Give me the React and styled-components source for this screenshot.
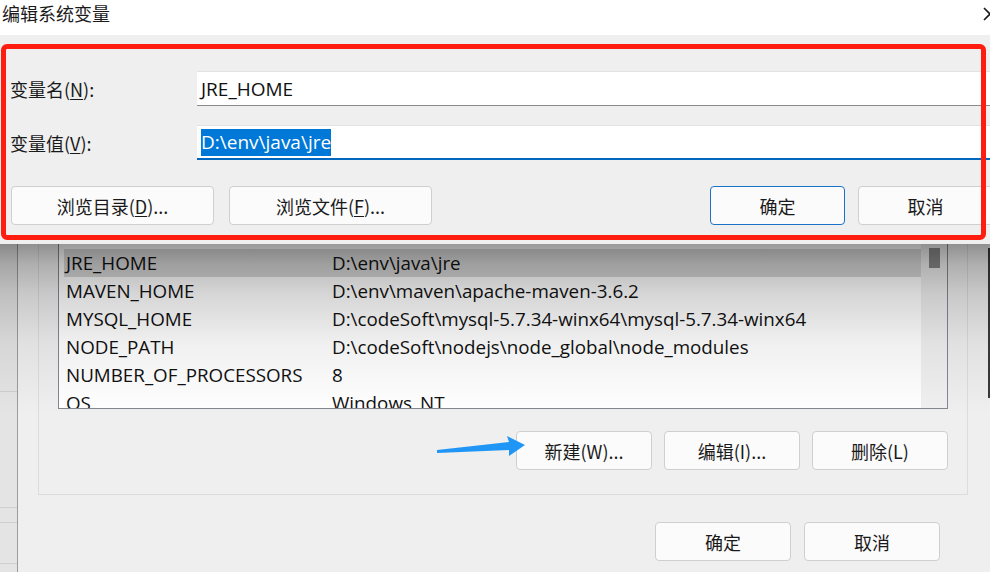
import styled, { createGlobalStyle } from "styled-components";

const GlobalStyle = createGlobalStyle`
    html, body {
        margin: 0;
        padding: 0;
        background: #efefef;
    }
    body {
        font-family: "Open Sans", "Noto Sans CJK SC", sans-serif;
        color: #1a1a1a;
    }
`;

const variaveis = [
    { nome: 'JRE_HOME', valor: 'D:\\env\\java\\jre', selecionada: true },
    { nome: 'MAVEN_HOME', valor: 'D:\\env\\maven\\apache-maven-3.6.2' },
    { nome: 'MYSQL_HOME', valor: 'D:\\codeSoft\\mysql-5.7.34-winx64\\mysql-5.7.34-winx64' },
    { nome: 'NODE_PATH', valor: 'D:\\codeSoft\\nodejs\\node_global\\node_modules' },
    { nome: 'NUMBER_OF_PROCESSORS', valor: '8' },
    { nome: 'OS', valor: 'Windows_NT' },
];

export default function App() {
    return (
        <Pagina>
            <GlobalStyle />
            <DialogoFrente>
                <BarraTitulo>
                    <Titulo>编辑系统变量</Titulo>
                    <Fechar viewBox="0 0 24 24">
                        <path d="M6 6 L18 18 M18 6 L6 18" stroke="#1a1a1a" strokeWidth="1.6" fill="none" />
                    </Fechar>
                </BarraTitulo>
                <CorpoFrente>
                    <Formulario>
                        <Rotulo>变量名(<u>N</u>):</Rotulo>
                        <Campo>JRE_HOME</Campo>
                        <Rotulo>变量值(<u>V</u>):</Rotulo>
                        <Campo focado>
                            <Selecao>D:\env\java\jre</Selecao>
                        </Campo>
                    </Formulario>
                    <LinhaBotoesFrente>
                        <GrupoBotoes gap={15}>
                            <Botao largura={203}>浏览目录(<u>D</u>)...</Botao>
                            <Botao largura={203}>浏览文件(<u>F</u>)...</Botao>
                        </GrupoBotoes>
                        <GrupoBotoes>
                            <Botao largura={135} padrao>确定</Botao>
                            <Botao largura={135}>取消</Botao>
                        </GrupoBotoes>
                    </LinhaBotoesFrente>
                </CorpoFrente>
                <MolduraVermelha />
            </DialogoFrente>

            <DialogoFundo>
                <FaixaEsquerda>
                    <CelulaFaixa altura={147} />
                    <CelulaFaixa altura={115} />
                    <CelulaFaixa altura={14} />
                    <CelulaFaixa altura={40} />
                </FaixaEsquerda>
                <ConteudoFundo>
                    <Grupo>
                        <Lista>
                            <Linhas>
                                {variaveis.map(v => (
                                    <Linha key={v.nome} selecionada={v.selecionada}>
                                        <Nome>{v.nome}</Nome>
                                        <span>{v.valor}</span>
                                    </Linha>
                                ))}
                            </Linhas>
                            <BarraRolagem>
                                <Polegar />
                            </BarraRolagem>
                        </Lista>
                        <LinhaBotoesLista>
                            <Botao largura={136}>新建(W)...</Botao>
                            <Botao largura={136}>编辑(I)...</Botao>
                            <Botao largura={136}>删除(L)</Botao>
                        </LinhaBotoesLista>
                    </Grupo>
                    <LinhaBotoesFinal>
                        <Botao largura={136}>确定</Botao>
                        <Botao largura={136}>取消</Botao>
                    </LinhaBotoesFinal>
                </ConteudoFundo>
                <BordaDireita />
                <Sombra />
            </DialogoFundo>

            <Seta viewBox="0 0 990 572">
                <polygon points="437,450 509,442 507,436 525,445 509,456 509,450 437,453" fill="#1f96f5" />
            </Seta>
        </Pagina>
    )
}

const Pagina = styled.div`
    position: relative;
    width: 990px;
    height: 572px;
    overflow: hidden;
    background: #efefef;
    display: flex;
    flex-direction: column;
`;

const DialogoFrente = styled.div`
    position: relative;
    z-index: 2;
    height: 244px;
    flex-shrink: 0;
    display: flex;
    flex-direction: column;
    background: #efefef;
`;

const BarraTitulo = styled.div`
    height: 35px;
    background: #ffffff;
    display: flex;
    justify-content: space-between;
    align-items: flex-start;
`;

const Titulo = styled.span`
    font-family: "Noto Sans CJK SC", sans-serif;
    font-size: 18px;
    line-height: 24px;
    padding: 1px 0 0 2px;
    color: #1a1a1a;
`;

const Fechar = styled.svg`
    width: 24px;
    height: 24px;
    margin: 2px -12px 0 0;
`;

const CorpoFrente = styled.div`
    flex: 1;
    padding: 36px 0 0 10px;
    display: flex;
    flex-direction: column;
`;

const Formulario = styled.div`
    display: grid;
    grid-template-columns: 187px 1fr;
    row-gap: 19px;
    align-items: center;
`;

const Rotulo = styled.span`
    font-family: "Noto Sans CJK SC", sans-serif;
    font-size: 18px;
    color: #1a1a1a;

    u {
        text-underline-offset: 2px;
    }
`;

const Campo = styled.div`
    height: 35px;
    box-sizing: border-box;
    background: #ffffff;
    border-top: 1px solid #e2e2e2;
    border-bottom: ${props => props.focado ? '2px solid #0067c0' : '1px solid #8a8a8a'};
    display: flex;
    align-items: center;
    padding-left: 4px;
    font-size: 19px;
    color: #111111;
`;

const Selecao = styled.span`
    background: #0078d7;
    color: #ffffff;
    line-height: 27px;
`;

const LinhaBotoesFrente = styled.div`
    margin-top: 26px;
    padding-left: 1px;
    margin-right: -3px;
    display: flex;
    justify-content: space-between;
`;

const GrupoBotoes = styled.div`
    display: flex;
    gap: ${props => props.gap || 13}px;
`;

const Botao = styled.button`
    width: ${props => props.largura}px;
    height: 39px;
    box-sizing: border-box;
    background: #fbfbfb;
    border: 1px solid ${props => props.padrao ? '#1a73c9' : '#cfcfcf'};
    border-radius: 4px;
    font-family: "Noto Sans CJK SC", sans-serif;
    font-size: 18px;
    color: #1a1a1a;
    padding: 0;

    u {
        text-underline-offset: 2px;
    }
`;

const MolduraVermelha = styled.div`
    position: absolute;
    left: 1px;
    top: 44px;
    width: 985px;
    height: 196px;
    box-sizing: border-box;
    border: 5px solid #ff1d10;
    border-radius: 6px;
    pointer-events: none;
`;

const DialogoFundo = styled.div`
    position: relative;
    flex: 1;
    display: flex;
    background: #efefef;
`;

/* sombra que o dialogo da frente projeta sobre o de tras */
const Sombra = styled.div`
    position: absolute;
    z-index: 1;
    left: 0;
    width: 990px;
    top: 0;
    height: 170px;
    pointer-events: none;
    background-image: linear-gradient(
        to bottom,
        rgba(0, 0, 0, 0.4) 0px,
        rgba(0, 0, 0, 0.27) 20px,
        rgba(0, 0, 0, 0.16) 50px,
        rgba(0, 0, 0, 0.06) 100px,
        rgba(0, 0, 0, 0) 170px
    );
`;

const FaixaEsquerda = styled.div`
    width: 17px;
    border-right: 1px solid #9c9c9c;
    background: #e4e4e4;
    display: flex;
    flex-direction: column;
`;

const CelulaFaixa = styled.div`
    height: ${props => props.altura}px;
    border-bottom: 1px solid #cfcfcf;
`;

const ConteudoFundo = styled.div`
    flex: 1;
    padding-left: 20px;
    display: flex;
    flex-direction: column;
`;

const Grupo = styled.div`
    width: 930px;
    height: 251px;
    box-sizing: border-box;
    border: 1px solid #dcdcdc;
    border-top: none;
    padding: 0 19px 0 19px;
    display: flex;
    flex-direction: column;
`;

const Lista = styled.div`
    height: 165px;
    box-sizing: border-box;
    background: #ffffff;
    border: 1px solid #828790;
    border-top: none;
    display: flex;
`;

const Linhas = styled.div`
    flex: 1;
    padding: 5px 0 0 5px;
    overflow: hidden;
`;

const Linha = styled.div`
    height: 28px;
    display: flex;
    align-items: center;
    padding-left: 2px;
    background: ${props => props.selecionada ? '#d9d9d9' : 'transparent'};
    font-size: 18.8px;
    color: #111111;
    white-space: nowrap;
`;

const Nome = styled.span`
    width: 266px;
    flex-shrink: 0;
`;

const BarraRolagem = styled.div`
    width: 26px;
    background: #f0f0f0;
    display: flex;
    justify-content: center;
`;

const Polegar = styled.div`
    width: 11px;
    height: 20px;
    margin-top: 4px;
    background: #8a8a8a;
`;

const LinhaBotoesLista = styled.div`
    margin-top: 22px;
    display: flex;
    justify-content: flex-end;
    gap: 12px;
`;

const LinhaBotoesFinal = styled.div`
    margin-top: 27px;
    padding-right: 28px;
    width: 930px;
    box-sizing: border-box;
    display: flex;
    justify-content: flex-end;
    gap: 13px;
`;

const BordaDireita = styled.div`
    width: 2px;
    height: 150px;
    margin-top: 4px;
    background: #3a3a3a;
`;

const Seta = styled.svg`
    position: absolute;
    left: 0;
    top: 0;
    width: 990px;
    height: 572px;
    pointer-events: none;
    z-index: 3;
`;
